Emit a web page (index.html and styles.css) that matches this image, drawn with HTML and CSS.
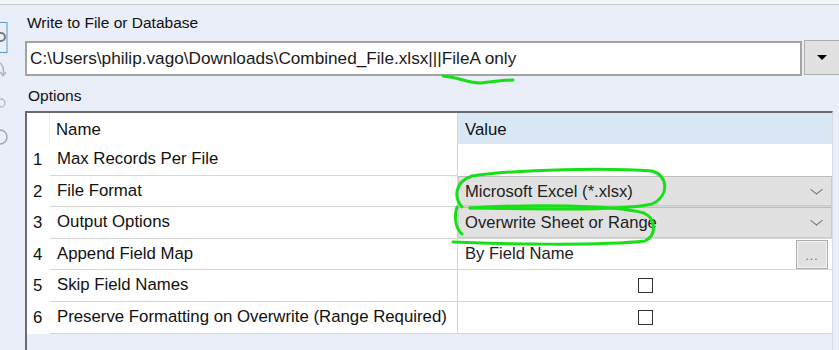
FILE: index.html
```html
<!DOCTYPE html>
<html>
<head>
<meta charset="utf-8">
<title>Output Data</title>
<link rel="stylesheet" href="styles.css">
</head>
<body>
<div class="topbar"></div>
<div class="main">
	<div class="toolstrip">
		<svg width="9" height="160" viewBox="0 0 9 160">
			<rect x="-4" y="17.5" width="11" height="30" fill="none" stroke="#5b9bd5" stroke-width="1"/>
			<circle cx="1" cy="32" r="4" fill="none" stroke="#7a7a7a" stroke-width="2"/>
			<path d="M-1 57 Q5 61 3 69 M0 67 L3 71 L6 67" fill="none" stroke="#b0b0b0" stroke-width="1.3"/>
			<circle cx="1" cy="98" r="4" fill="none" stroke="#b8b8b8" stroke-width="1.3"/>
			<circle cx="0" cy="132" r="7" fill="none" stroke="#a8a8a8" stroke-width="1.5"/>
		</svg>
	</div>
	<div class="panel">
		<div class="label">Write to File or Database</div>
		<div class="pathRow">
			<div class="pathBox">C:\Users\philip.vago\Downloads\Combined_File.xlsx|||FileA only</div>
			<div class="dropBtn"><span class="tri"></span></div>
		</div>
		<div class="label optLabel">Options</div>
		<div class="grid">
			<div class="row head">
				<div class="num"></div>
				<div class="name">Name</div>
				<div class="value valHead">Value</div>
			</div>
			<div class="row first">
				<div class="num">1</div>
				<div class="name">Max Records Per File</div>
				<div class="value"></div>
			</div>
			<div class="row">
				<div class="num">2</div>
				<div class="name">File Format</div>
				<div class="value"><div class="combo">Microsoft Excel (*.xlsx)<span class="chev"></span></div></div>
			</div>
			<div class="row">
				<div class="num">3</div>
				<div class="name">Output Options</div>
				<div class="value"><div class="combo">Overwrite Sheet or Range<span class="chev"></span></div></div>
			</div>
			<div class="row">
				<div class="num">4</div>
				<div class="name">Append Field Map</div>
				<div class="value text">By Field Name<span class="dots">...</span></div>
			</div>
			<div class="row">
				<div class="num">5</div>
				<div class="name">Skip Field Names</div>
				<div class="value center"><span class="check"></span></div>
			</div>
			<div class="row">
				<div class="num">6</div>
				<div class="name">Preserve Formatting on Overwrite (Range Required)</div>
				<div class="value center"><span class="check"></span></div>
			</div>
		</div>
	</div>
</div>
<svg class="marks" width="839" height="350" viewBox="0 0 839 350">
	<path d="M443 76 C458 77 468 83 481 83 C493 82 501 80 513 80"/>
	<path d="M462 207 C454 198 454 182 472 176 C520 169 610 168 652 171 C668 175 670 196 652 204 C620 211 540 209 470 208"/>
	<path d="M457 207 C454 216 455 228 462 234 M470 208 C530 204 615 205 644 213 C656 219 657 235 645 241 C600 246 500 244 453 242"/>
</svg>
</body>
</html>
```
FILE: styles.css
```css
body
{
	margin: 0;
	background-color: #e9eef8;
	font-family: "Liberation Sans", Arial, sans-serif;
	color: #111;
	height: 350px;
	overflow: hidden;
	position: relative;
}
.topbar
{
	height: 4px;
	background-color: #f2f4f8;
	border-bottom: 1px solid #c6c9cf;
}
.main {display: flex;}
.toolstrip
{
	width: 9px;
	flex: none;
	overflow: hidden;
}
.panel
{
	flex: 1;
	padding-left: 16px;
	padding-top: 8px;
}
.label
{
	font-size: 15.5px;
	line-height: 20px;
	height: 20px;
	padding-left: 2px;
}
.pathRow
{
	display: flex;
	margin-top: 7px;
	height: 35px;
}
.pathBox
{
	width: 770px;
	height: 31px;
	margin-top: 1px;
	background: #fff;
	border: 2px solid #a3a3a3;
	font-size: 17.2px;
	line-height: 31px;
	padding-left: 3px;
	color: #1a1a1a;
	white-space: nowrap;
	overflow: hidden;
}
.dropBtn
{
	width: 34px;
	height: 33px;
	margin-left: 2px;
	background: #e1e1e1;
	border: 1px solid #adadad;
	display: flex;
	align-items: center;
	justify-content: center;
}
.tri
{
	width: 0;
	height: 0;
	border-left: 5px solid transparent;
	border-right: 5px solid transparent;
	border-top: 5px solid #000;
}
.optLabel {margin-top: 11px; padding-left: 3px;}
.grid
{
	margin-top: 5px;
	width: 805px;
	height: 240px;
	border-top: 2px solid #6b6b6b;
	border-left: 2px solid #6b6b6b;
	border-right: 1px solid #d6dbe3;
	font-size: 16.8px;
}
.row
{
	display: grid;
	grid-template-columns: 23px 407px 1fr;
	height: 31.6px;
}
.row .num
{
	background: #fff;
	padding-left: 6px;
	line-height: 31px;
}
.row .name
{
	background: #fff;
	border-bottom: 1px solid #d6d6d6;
	padding-left: 7px;
	line-height: 30px;
	white-space: nowrap;
}
.row .value
{
	background: #fff;
	border-left: 1px solid #d6d6d6;
	border-bottom: 1px solid #d6d6d6;
	position: relative;
}
.row.head {height: 31px;}
.row.head .num {border-right: 1px solid #ececec;}
.row.head .name {border-bottom: none; padding-left: 6px; line-height: 33px;}
.row.head .value {border-bottom: none;}
.row.first .value {border-bottom: 1px solid #fff;}
.valHead
{
	background: #dae8f6 !important;
	padding-left: 7px;
	line-height: 33px;
	margin-bottom: 1px;
}
.combo
{
	box-sizing: border-box;
	height: 30.6px;
	background: #e1e1e1;
	border: 1px solid #cbcbcb;
	border-top-color: #bdbdbd;
	line-height: 29px;
	padding-left: 6px;
	font-size: 16.6px;
	color: #222;
	position: relative;
}
.chev
{
	position: absolute;
	right: 10px;
	top: 8px;
	width: 8px;
	height: 8px;
	border-right: 1.5px solid #606060;
	border-bottom: 1.5px solid #606060;
	transform: scaleY(0.8) rotate(45deg);
}
.value.text
{
	padding-left: 7px;
	line-height: 30px;
	font-size: 16.6px;
	color: #222;
}
.dots
{
	position: absolute;
	right: 4px;
	top: 1px;
	width: 30px;
	height: 27px;
	background: #e1e1e1;
	border: 1px solid #adadad;
	box-shadow: inset 0 0 0 1px #f3f3f3;
	color: #7a5c8a;
	font-size: 12px;
	line-height: 30px;
	text-align: center;
	letter-spacing: 1px;
}
.value.center
{
	display: flex;
	align-items: center;
	justify-content: center;
}
.check
{
	width: 13px;
	height: 13px;
	border: 1.5px solid #333;
	background: #fff;
}
.marks
{
	position: absolute;
	left: 0;
	top: 0;
	pointer-events: none;
}
.marks path
{
	fill: none;
	stroke: #18e018;
	stroke-width: 3;
	stroke-linecap: round;
}
```
